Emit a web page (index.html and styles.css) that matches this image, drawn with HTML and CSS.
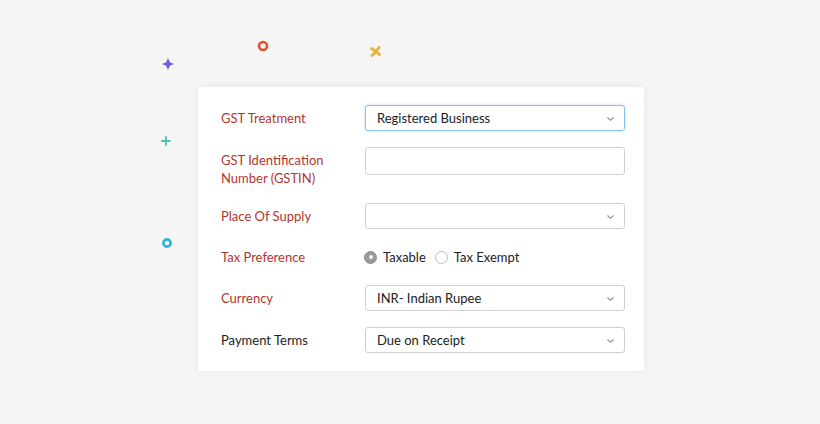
FILE: index.html
```html
<!DOCTYPE html>
<html>
<head>
<meta charset="utf-8">
<link rel="stylesheet" href="styles.css">
</head>
<body>
<div class="stage">
  <svg class="deco deco-star" width="12" height="12" viewBox="0 0 12 12"><path d="M6 0 L7.8 4.2 L12 6 L7.8 7.8 L6 12 L4.2 7.8 L0 6 L4.2 4.2 Z" fill="#6a5de6"/></svg>
  <svg class="deco deco-ring-red" width="12" height="12" viewBox="0 0 12 12"><circle cx="6" cy="6" r="4" fill="none" stroke="#e0532c" stroke-width="2.6"/></svg>
  <svg class="deco deco-cross-yellow" width="13" height="13" viewBox="0 0 13 13"><path d="M2.5 3.5 Q6.5 5.5 10.5 9.5 M10 2.5 Q7 7 3 10.5" fill="none" stroke="#e9b033" stroke-width="2.8" stroke-linecap="round"/></svg>
  <svg class="deco deco-plus" width="10" height="10" viewBox="0 0 10 10"><path d="M5 1 V9 M1 5 H9" stroke="#4fc1b2" stroke-width="1.8" stroke-linecap="round"/></svg>
  <svg class="deco deco-ring-blue" width="12" height="12" viewBox="0 0 12 12"><circle cx="6" cy="6" r="3.6" fill="none" stroke="#2cb2dc" stroke-width="2.6"/></svg>

  <div class="card">
    <div class="row">
      <div class="label req">GST Treatment</div>
      <div class="select focused"><span>Registered Business</span><svg class="chev" width="9" height="6" viewBox="0 0 9 6"><path d="M1.5 1.5 L4.5 4.3 L7.5 1.5" fill="none" stroke="#8a8a8a" stroke-width="1.1"/></svg></div>
    </div>
    <div class="row">
      <div class="label req two">GST Identification<br>Number (GSTIN)</div>
      <div class="select tall"></div>
    </div>
    <div class="row">
      <div class="label req">Place Of Supply</div>
      <div class="select"><span></span><svg class="chev" width="9" height="6" viewBox="0 0 9 6"><path d="M1.5 1.5 L4.5 4.3 L7.5 1.5" fill="none" stroke="#8a8a8a" stroke-width="1.1"/></svg></div>
    </div>
    <div class="row radio-row">
      <div class="label req">Tax Preference</div>
      <div class="radios">
        <span class="radio checked"></span><span class="rtext">Taxable</span>
        <span class="radio"></span><span class="rtext">Tax Exempt</span>
      </div>
    </div>
    <div class="row">
      <div class="label req">Currency</div>
      <div class="select"><span>INR- Indian Rupee</span><svg class="chev" width="9" height="6" viewBox="0 0 9 6"><path d="M1.5 1.5 L4.5 4.3 L7.5 1.5" fill="none" stroke="#8a8a8a" stroke-width="1.1"/></svg></div>
    </div>
    <div class="row">
      <div class="label">Payment Terms</div>
      <div class="select"><span>Due on Receipt</span><svg class="chev" width="9" height="6" viewBox="0 0 9 6"><path d="M1.5 1.5 L4.5 4.3 L7.5 1.5" fill="none" stroke="#8a8a8a" stroke-width="1.1"/></svg></div>
    </div>
  </div>
</div>
</body>
</html>
```
FILE: styles.css
```css
html, body {
  margin: 0;
  padding: 0;
  background: #f5f5f5;
  font-family: Lato, "Open Sans", Arial, sans-serif;
}
.stage {
  position: relative;
  width: 820px;
  height: 424px;
  padding: 87px 0 0 198px;
  box-sizing: border-box;
}
.deco { position: absolute; display: block; }
.deco-star { left: 162px; top: 58px; }
.deco-ring-red { left: 257px; top: 40px; }
.deco-cross-yellow { left: 369px; top: 45px; }
.deco-plus { left: 161px; top: 136px; }
.deco-ring-blue { left: 161px; top: 237px; }

.card {
  width: 446px;
  box-sizing: border-box;
  background: #fff;
  padding: 18px 19px 18px 23px;
  box-shadow: 0 0 8px rgba(0,0,0,0.06);
  display: flex;
  flex-direction: column;
  gap: 16px;
}
.row {
  display: flex;
  align-items: flex-start;
}
.label {
  width: 144px;
  flex: none;
  font-size: 13px;
  line-height: 18px;
  padding-top: 4px;
  color: #222;
}
.label.req { color: #b3352f; }
.select {
  width: 260px;
  height: 26px;
  box-sizing: border-box;
  border: 1px solid #cfcfcf;
  border-radius: 3px;
  display: flex;
  align-items: center;
  justify-content: space-between;
  padding: 0 9px 0 11px;
  font-size: 13px;
  color: #222;
}
.select.tall { height: 28px; }
.select.focused {
  border-color: #8fc0e8;
  box-shadow: 0 0 3px rgba(100,160,220,0.45);
}
.chev { display: block; margin-top: 1px; }
.radio-row { height: 24px; align-items: center; }
.radio-row .label { padding-top: 0; }
.radios {
  display: flex;
  align-items: center;
  font-size: 13px;
  color: #222;
  margin-left: -1px;
}
.radio {
  width: 13px;
  height: 13px;
  box-sizing: border-box;
  border-radius: 50%;
  border: 1px solid #bdbdbd;
  background: #fff;
  margin-right: 6px;
  position: relative;
}
.radio.checked {
  background: #9a9a9a;
  border-color: #8f8f8f;
}
.radio.checked::after {
  content: "";
  position: absolute;
  left: 3.5px;
  top: 3.5px;
  width: 4px;
  height: 4px;
  border-radius: 50%;
  background: #f0f0f0;
}
.rtext { margin-right: 9px; }
```
